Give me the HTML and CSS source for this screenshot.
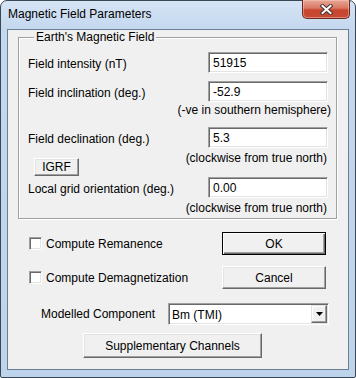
FILE: index.html
```html
<!DOCTYPE html>
<html lang="en">
<head>
    <meta charset="UTF-8">
    <title>Magnetic Field Parameters</title>
    <link rel="stylesheet" href="styles.css">
</head>
<body>
    <div class="window">
        <div class="titlebar">
            <span class="title">Magnetic Field Parameters</span>
            <button class="close" aria-label="Close">
                <svg width="13" height="11" viewBox="0 0 13 11">
                    <path d="M2.5 2 L10.5 9 M10.5 2 L2.5 9" stroke="#4b3434" stroke-width="4" stroke-linecap="square"/>
                    <path d="M2.5 2 L10.5 9 M10.5 2 L2.5 9" stroke="#fff" stroke-width="2" stroke-linecap="square"/>
                </svg>
            </button>
        </div>

        <div class="client">
            <fieldset class="group">
                <legend>Earth's Magnetic Field</legend>

                <div class="field-row first">
                    <label>Field intensity (nT)</label>
                    <input class="edit" type="text" value="51915">
                </div>
                <div class="field-row">
                    <label>Field inclination (deg.)</label>
                    <input class="edit" type="text" value="-52.9">
                </div>
                <div class="note note-wide">(-ve in southern hemisphere)</div>

                <div class="field-row after-note">
                    <label>Field declination (deg.)</label>
                    <input class="edit" type="text" value="5.3">
                </div>
                <div class="igrf-row">
                    <button class="btn igrf">IGRF</button>
                    <span class="note">(clockwise from true north)</span>
                </div>

                <div class="field-row tight">
                    <label>Local grid orientation (deg.)</label>
                    <input class="edit" type="text" value="0.00">
                </div>
                <div class="note last">(clockwise from true north)</div>
            </fieldset>

            <div class="options">
                <div class="option-row">
                    <label class="check"><span class="box"></span>Compute Remanence</label>
                    <button class="btn action default">OK</button>
                </div>
                <div class="option-row">
                    <label class="check"><span class="box"></span>Compute Demagnetization</label>
                    <button class="btn action">Cancel</button>
                </div>
            </div>

            <div class="component-row">
                <span class="component-label">Modelled Component</span>
                <div class="combo">
                    <span class="combo-text">Bm (TMI)</span>
                    <span class="drop">
                        <svg width="7" height="4" viewBox="0 0 7 4"><path d="M0 0 H7 L3.5 4 Z" fill="#000"/></svg>
                    </span>
                </div>
            </div>

            <button class="btn supp">Supplementary Channels</button>
        </div>
    </div>
</body>
</html>
```

FILE: styles.css
```css
* {
    margin: 0;
    padding: 0;
    box-sizing: border-box;
}

body {
    font-family: "Liberation Sans", Arial, sans-serif;
    font-size: 12px;
    line-height: 14px;
    color: #000;
    background: #fff;
}

.window {
    width: 356px;
    height: 378px;
    display: flex;
    flex-direction: column;
    border: 1px solid #3b4654;
    border-radius: 7px 7px 2px 2px;
    background: linear-gradient(to bottom, #d6e4f5 0, #c4d8ef 28px, #bed4ec 100%);
    padding: 0 6px 7px;
}

.titlebar {
    height: 28px;
    display: flex;
    align-items: flex-start;
    justify-content: space-between;
}

.title {
    margin: 6px 0 0 1px;
}

.close {
    width: 48px;
    height: 19px;
    margin-top: -1px;
    margin-right: -1px;
    border: 1px solid #6e2a1e;
    border-top: none;
    border-radius: 0 0 5px 5px;
    background: linear-gradient(to bottom, #e7a797 0, #d97763 45%, #c9452f 55%, #c64a34 100%);
    box-shadow: inset 0 0 0 1px rgba(255, 210, 200, 0.45);
    display: flex;
    align-items: center;
    justify-content: center;
}

.client {
    flex: 1;
    border: 1px solid #6a7f96;
    background: #f0f0f0;
    padding: 0 11px 0 10px;
}

/* group box */
.group {
    border: 1px solid #a0a0a0;
    box-shadow: inset 1px 1px 0 #fff, 1px 1px 0 #fff;
    padding: 8px 8px 3px 9px;
    min-width: 0;
}

.group legend {
    margin-left: 6px;
    padding: 0 2px;
    background: #f0f0f0;
}

.field-row {
    height: 21px;
    display: flex;
    align-items: center;
    justify-content: space-between;
    margin-top: 8px;
}

.field-row.first {
    margin-top: 0;
}

.field-row.after-note {
    margin-top: 10px;
}

.field-row.tight {
    margin-top: 1px;
}

.field-row label {
    padding-top: 2px;
}

.edit {
    width: 120px;
    height: 21px;
    font: inherit;
    color: #000;
    padding: 0 4px;
    background: #fff;
    border: 1px solid;
    border-color: #a0a0a0 #fff #fff #a0a0a0;
    box-shadow: inset 1px 1px 0 #696969, inset -1px -1px 0 #e3e3e3;
    outline: none;
}

.note {
    text-align: right;
    margin-right: 1px;
}

.note-wide {
    margin-top: 1px;
    margin-right: -3px;
}

.note.last {
    margin-top: 3px;
}

.igrf-row {
    display: flex;
    align-items: flex-start;
    justify-content: space-between;
    margin-top: 3px;
    height: 25px;
}

/* classic raised buttons */
.btn {
    font: inherit;
    color: #000;
    background: #f0f0f0;
    border: 1px solid;
    border-color: #fff #696969 #696969 #fff;
    box-shadow: inset -1px -1px 0 #a0a0a0, inset 1px 1px 0 #e3e3e3;
}

.igrf {
    width: 45px;
    height: 18px;
    margin: 7px 0 0 6px;
}

.options {
    margin-top: 13px;
    padding: 0 11px;
}

.option-row {
    height: 23px;
    display: flex;
    align-items: center;
    justify-content: space-between;
}

.option-row + .option-row {
    margin-top: 11px;
}

.check {
    display: flex;
    align-items: center;
}

.box {
    width: 13px;
    height: 13px;
    margin-right: 4px;
    background: #fff;
    border: 1px solid;
    border-color: #a0a0a0 #fff #fff #a0a0a0;
    box-shadow: inset 1px 1px 0 #696969, inset -1px -1px 0 #e3e3e3;
}

.action {
    width: 104px;
    height: 23px;
}

.action.default {
    border: 1px solid #000;
    box-shadow: inset 1px 1px 0 #fff, inset -1px -1px 0 #696969, inset -2px -2px 0 #a0a0a0;
}

.component-row {
    display: flex;
    align-items: center;
    margin-top: 14px;
    padding-left: 23px;
}

.component-label {
    width: 127px;
}

.combo {
    width: 161px;
    height: 22px;
    display: flex;
    align-items: center;
    justify-content: space-between;
    background: #fff;
    border: 1px solid;
    border-color: #a0a0a0 #fff #fff #a0a0a0;
    box-shadow: inset 1px 1px 0 #696969, inset -1px -1px 0 #e3e3e3;
    padding: 1px 1px 1px 3px;
}

.combo-text {
    padding-top: 1px;
}

.drop {
    width: 16px;
    height: 18px;
    display: flex;
    align-items: center;
    justify-content: center;
    background: #f0f0f0;
    border: 1px solid;
    border-color: #e3e3e3 #696969 #696969 #e3e3e3;
    box-shadow: inset -1px -1px 0 #a0a0a0, inset 1px 1px 0 #fff;
}

.supp {
    display: block;
    width: 179px;
    height: 25px;
    margin: 8px 0 0 65px;
}
```
